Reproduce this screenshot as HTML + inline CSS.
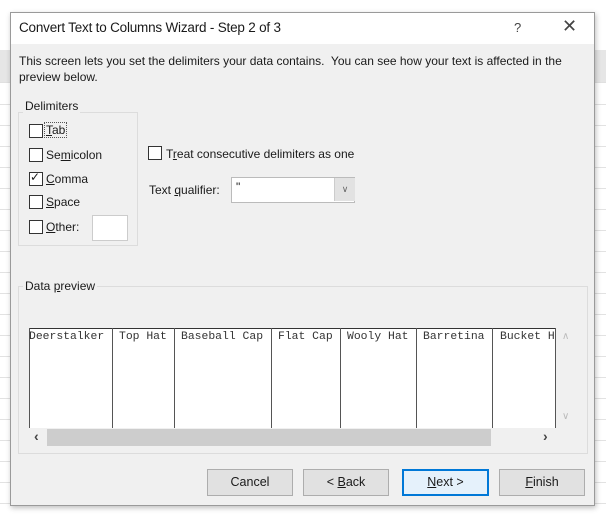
<!DOCTYPE html>
<html><head><style>
body{margin:0;width:606px;height:520px;position:relative;overflow:hidden;background:#fff;font-family:"Liberation Sans",sans-serif;font-size:12px;color:#1a1a1a}
.a{position:absolute}
.grid{position:absolute;left:0;top:0;width:606px;height:520px;background:
linear-gradient(#e0e0e0 0 0) 0 82px/606px 1px no-repeat,
repeating-linear-gradient(#fff 0 20px,#e2e2e2 20px 21px) 0 84px/606px 440px no-repeat}
.cb{position:absolute;width:12px;height:12px;border:1px solid #333;background:#fff}
.btn{position:absolute;top:469px;width:84px;height:25px;border:1px solid #adadad;background:#e1e1e1;text-align:center;line-height:25px;font-size:12.5px}
.grp{position:absolute;border:1px solid #dcdcdc}
.mono{font-family:"Liberation Mono",monospace;font-size:11.4px;position:absolute;top:331px;color:#333}
.vl{position:absolute;top:328px;width:1px;height:100px;background:#555}
</style></head><body>
<div class="grid"></div>
<div class="a" style="left:0;top:50px;width:606px;height:32px;background:#e6e6e6"></div>
<div class="a" style="left:10px;top:12px;width:583px;height:492px;background:#f0f0f0;border:1px solid #9a9a9a;box-shadow:1px 2px 5px rgba(0,0,0,.25)"></div>
<div class="a" style="left:11px;top:13px;width:583px;height:31px;background:#fff"></div>
<div class="a" style="left:19px;top:20px;font-size:13.5px;letter-spacing:-0.2px">Convert Text to Columns Wizard - Step 2 of 3</div>
<div class="a" style="left:514px;top:20px;font-size:13px;color:#444">?</div>
<div class="a" style="left:562px;top:16px;font-size:18px;color:#444">✕</div>
<div class="a" style="left:19px;top:53px;line-height:16px;white-space:nowrap">This screen lets you set the delimiters your data contains.&nbsp; You can see how your text is affected in the<br>preview below.</div>
<div class="grp" style="left:18px;top:112px;width:118px;height:132px"></div>
<div class="a" style="left:23px;top:99px;background:#f0f0f0;padding:0 2px">Delimiters</div>
<div class="cb" style="left:29px;top:124px"></div><div class="a" style="left:44px;top:122px;border:1px dotted #555;padding:0 1px"><u>T</u>ab</div>
<div class="cb" style="left:29px;top:148px"></div><div class="a" style="left:46px;top:148px">Se<u>m</u>icolon</div>
<div class="cb" style="left:29px;top:172px"></div><div class="a" style="left:30px;top:170px;font-size:12px">✓</div><div class="a" style="left:46px;top:172px"><u>C</u>omma</div>
<div class="cb" style="left:29px;top:195px"></div><div class="a" style="left:46px;top:195px"><u>S</u>pace</div>
<div class="cb" style="left:29px;top:220px"></div><div class="a" style="left:46px;top:220px"><u>O</u>ther:</div>
<div class="a" style="left:92px;top:215px;width:34px;height:24px;background:#fff;border:1px solid #ccc"></div>
<div class="cb" style="left:148px;top:146px"></div><div class="a" style="left:166px;top:147px">T<u>r</u>eat consecutive delimiters as one</div>
<div class="a" style="left:149px;top:183px">Text <u>q</u>ualifier:</div>
<div class="a" style="left:231px;top:177px;width:122px;height:24px;background:#fff;border:1px solid #bbb"></div>
<div class="a" style="left:334px;top:178px;width:20px;height:23px;background:#e2e2e2;border-left:1px solid #ccc;text-align:center;font-size:9px;line-height:23px;color:#666">&#8744;</div>
<div class="a" style="left:236px;top:180px">"</div>
<div class="grp" style="left:18px;top:286px;width:568px;height:166px"></div>
<div class="a" style="left:23px;top:279px;background:#f0f0f0;padding:0 2px">Data <u>p</u>review</div>
<div class="a" style="left:29px;top:328px;width:527px;height:100px;background:#fff;border-top:1px solid #333"></div>
<div class="vl" style="left:29px"></div><div class="vl" style="left:112px"></div><div class="vl" style="left:174px"></div><div class="vl" style="left:271px"></div><div class="vl" style="left:340px"></div><div class="vl" style="left:416px"></div><div class="vl" style="left:492px"></div><div class="vl" style="left:555px"></div>
<div class="mono" style="left:29px">Deerstalker</div>
<div class="mono" style="left:119px">Top Hat</div>
<div class="mono" style="left:181px">Baseball Cap</div>
<div class="mono" style="left:278px">Flat Cap</div>
<div class="mono" style="left:347px">Wooly Hat</div>
<div class="mono" style="left:423px">Barretina</div>
<div class="a" style="left:493px;top:328px;width:62px;overflow:hidden;height:20px"><div class="mono" style="left:7px;top:3px;white-space:nowrap">Bucket Hat</div></div>
<div class="a" style="left:562px;top:331px;font-size:10px;color:#bbb">&#8743;</div>
<div class="a" style="left:562px;top:411px;font-size:10px;color:#bbb">&#8744;</div>
<div class="a" style="left:29px;top:428px;width:527px;height:20px;background:#f0f0f0"></div>
<div class="a" style="left:47px;top:429px;width:444px;height:17px;background:#cdcdcd"></div>
<div class="a" style="left:34px;top:428px;font-size:14px;font-weight:bold;color:#444">‹</div>
<div class="a" style="left:543px;top:428px;font-size:14px;font-weight:bold;color:#444">›</div>
<div class="btn" style="left:207px">Cancel</div>
<div class="btn" style="left:303px">&lt; <u>B</u>ack</div>
<div class="btn" style="left:402px;border:2px solid #0078d7;width:83px;height:23px;line-height:23px;background:#e5f1fb"><u>N</u>ext &gt;</div>
<div class="btn" style="left:499px"><u>F</u>inish</div>
</body></html>
